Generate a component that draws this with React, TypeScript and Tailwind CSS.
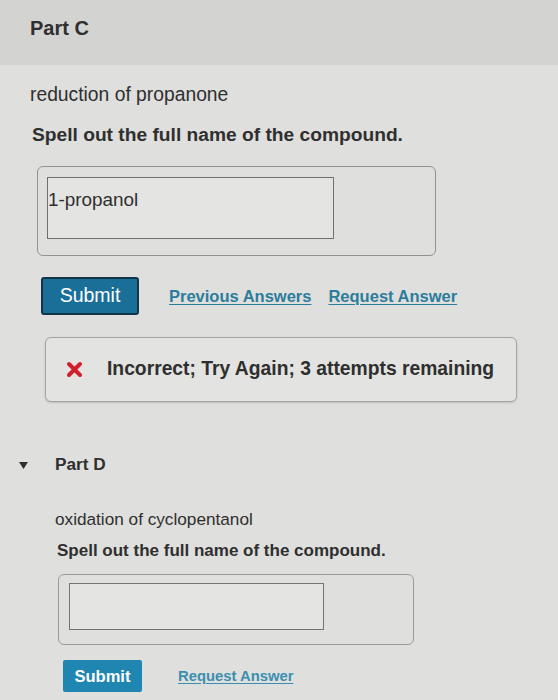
export default function App() {
  return (
    <div
      className="w-[558px] h-[700px] overflow-hidden bg-[#dfdfdd] text-[#2f2f2f]"
      style={{ fontFamily: '"Liberation Sans", Arial, sans-serif' }}
    >
      {/* Part C header */}
      <div className="h-[65px] bg-[#d3d3d2] pl-[30px] pt-[15px]">
        <div className="text-[20px] leading-[26px] font-bold">Part C</div>
      </div>

      <div className="pl-[30px]">
        <p className="mt-[18px] text-[19.3px] leading-[24px]">reduction of propanone</p>
        <p className="mt-[16px] ml-[2px] text-[19.2px] leading-[24px] font-bold">
          Spell out the full name of the compound.
        </p>
      </div>

      <div className="ml-[37px] mt-[19px] w-[399px] h-[90px] rounded-[6px] border border-[#929292] pl-[9px] pt-[10px]">
        <div className="w-[287px] h-[62px] border border-[#6f6f6f] bg-[#e4e4e2] pt-[11px] text-[18.9px] leading-[22px]">
          1-propanol
        </div>
      </div>

      <div className="ml-[41px] mt-[21px] flex items-center">
        <button className="w-[98px] h-[38px] rounded-[3px] border-2 border-[#12354a] bg-[#1a6f98] text-white text-[19.5px] leading-none">
          Submit
        </button>
        <a className="ml-[30px] text-[16.5px] font-bold text-[#2c7d9c] underline underline-offset-2">
          Previous Answers
        </a>
        <a className="ml-[17px] text-[16.5px] font-bold text-[#2c7d9c] underline underline-offset-2">
          Request Answer
        </a>
      </div>

      <div className="ml-[45px] mt-[22px] w-[472px] h-[65px] rounded-[6px] border border-[#a4a4a4] bg-[#e3e3e1] flex items-center pl-[20px] shadow-[0_1px_2px_rgba(0,0,0,0.15)]">
        <svg width="17" height="17" viewBox="0 0 17 17" className="shrink-0">
          <path d="M3 3 L14 14 M14 3 L3 14" stroke="#d1202a" strokeWidth="4" strokeLinecap="round" />
        </svg>
        <span className="ml-[24px] text-[19.3px] font-bold">
          Incorrect; Try Again; 3 attempts remaining
        </span>
      </div>

      {/* Part D */}
      <div className="mt-[53px] flex items-center h-[20px]">
        <svg width="9" height="7" viewBox="0 0 9 7" className="ml-[19px]">
          <path d="M0 0 L9 0 L4.5 7 Z" fill="#2f2f2f" />
        </svg>
        <span className="ml-[27px] text-[17.2px] font-bold">Part D</span>
      </div>

      <div className="pl-[55px]">
        <p className="mt-[34px] text-[17.2px] leading-[20px]">oxidation of cyclopentanol</p>
        <p className="mt-[12px] ml-[2px] text-[17px] leading-[20px] font-bold">
          Spell out the full name of the compound.
        </p>
      </div>

      <div className="ml-[58px] mt-[13px] w-[356px] h-[71px] rounded-[6px] border border-[#9a9a9a] pl-[10px] pt-[8px]">
        <div className="w-[255px] h-[47px] border border-[#737373] bg-[#e4e4e2]" />
      </div>

      <div className="ml-[63px] mt-[15px] flex items-center">
        <button className="w-[79px] h-[32px] rounded-[2px] bg-[#1e86b1] text-white text-[16.5px] font-bold leading-none">
          Submit
        </button>
        <a className="ml-[36px] text-[14.8px] font-bold text-[#3a8fb0] underline underline-offset-2">
          Request Answer
        </a>
      </div>
    </div>
  );
}
